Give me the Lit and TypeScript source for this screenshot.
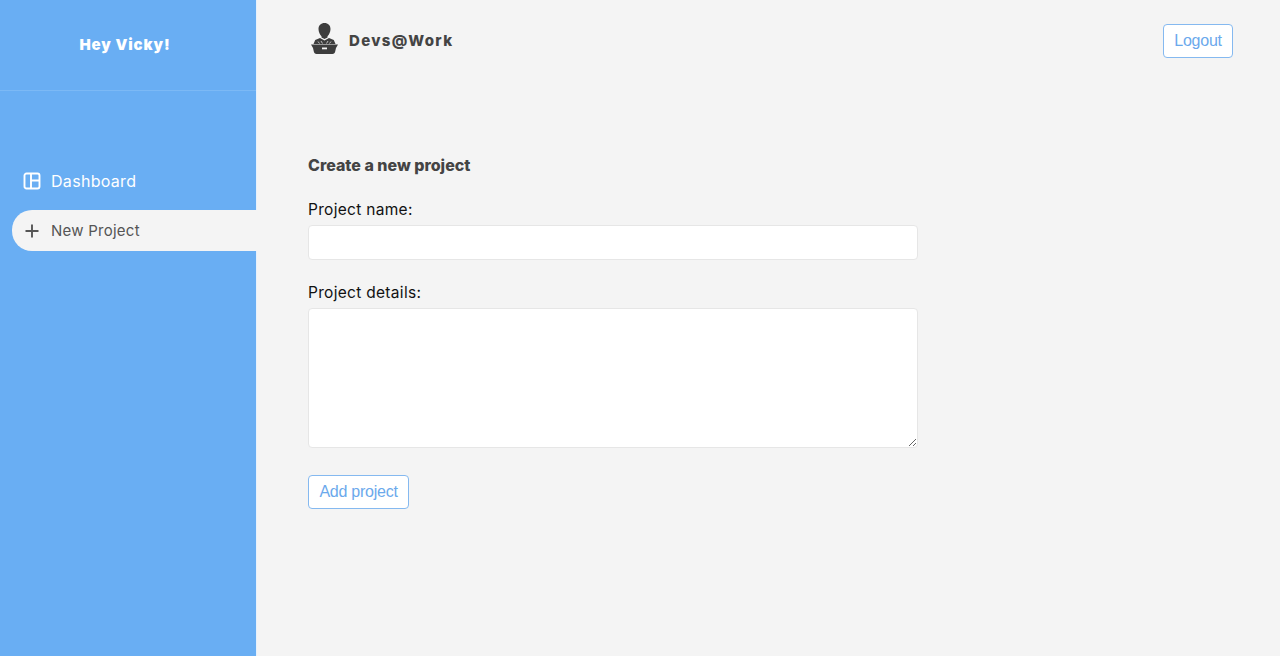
import { LitElement, html, css } from "lit";
import { customElement } from "lit/decorators.js";

@customElement("app-root")
export class AppRoot extends LitElement {
  static styles = css`
    :host { display: flex; width: 100%; height: 656px; background: #f4f4f4; font-family: "Inter", "Noto Sans", sans-serif; overflow: hidden; }
    * { box-sizing: border-box; }
    .side { width: 257px; flex: none; background: #69aef3; border-right: 1px solid #e6f1fc; color: #fff; padding-left: 12px; }
    .user { margin-left: -12px; height: 91px; border-bottom: 1px solid #7cb9f5; padding: 35px 6px 0 0; text-align: center; font-weight: 900; font-size: 15px; line-height: 20px; letter-spacing: 0.85px; }
    .nav { display: flex; flex-direction: column; gap: 9px; margin-top: 69px; margin-right: -1px; }
    .item { display: flex; align-items: center; gap: 10px; height: 41px; padding-left: 11px; border-radius: 20px 0 0 20px; font-size: 16px; letter-spacing: 0.3px; }
    .item.active { background: #f4f4f4; color: #555; font-size: 15px; letter-spacing: 0.25px; }
    .item svg { width: 18px; height: 18px; flex: none; }
    .main { flex: 1; padding: 0 47px 0 51px; }
    .top { height: 81px; display: flex; justify-content: space-between; align-items: center; }
    .logo { display: flex; align-items: center; gap: 11px; padding-left: 3px; font-family: "Inter", sans-serif; font-weight: 800; font-size: 15px; letter-spacing: 1.35px; color: #444; }
    .logo svg { width: 27px; height: 31px; margin-bottom: 4px; }
    button { background: #fff; border: 1px solid #85b9f0; border-radius: 4px; color: #6ba9ec; font: 16px "Liberation Sans", Arial, sans-serif; letter-spacing: -0.25px; height: 34px; padding: 0 11px; }
    .logout { width: 70px; padding: 0; }
    .form { display: flex; flex-direction: column; width: 610px; margin-top: 74px; }
    h2 { margin: 0 0 25px; font-size: 16px; font-weight: 800; line-height: 20px; color: #444; letter-spacing: 0; }
    label { font-size: 15.5px; line-height: 20px; color: #111; margin-bottom: 5px; display: block; letter-spacing: 0.3px; }
    input, textarea { display: block; width: 610px; background: #fff; border: 1px solid #e6e6e6; border-radius: 4px; outline: none; margin: 0; padding: 0 8px; }
    input { height: 35px; margin-bottom: 23px; }
    textarea { height: 140px; resize: vertical; margin-bottom: 27px; }
    .add { align-self: flex-start; width: 101px; padding: 0; }
  `;

  render() {
    return html`
      <aside class="side">
        <div class="user">Hey Vicky!</div>
        <nav class="nav">
          <div class="item">
            <svg viewBox="0 0 18 18" fill="none" stroke="#fff" stroke-width="1.9"><rect x="1.5" y="1.5" width="15" height="15" rx="2"/><path d="M8 1.500v15M8 8.500h8.500"/></svg>
            Dashboard
          </div>
          <div class="item active">
            <svg viewBox="0 0 18 18" fill="none" stroke="#555" stroke-width="1.9"><path d="M9 2.500v13M2.500 9h13"/></svg>
            New Project
          </div>
        </nav>
      </aside>
      <main class="main">
        <header class="top">
          <div class="logo">
            <svg viewBox="0 0 27 31" fill="#3d3d3d">
              <path d="M13.500 0c3.600 0 6 2.400 6 6 0 3.200-1.600 6-3 7.200v1.300l-3 1.500-3-1.500v-1.300C9.100 12 7.500 9.200 7.500 6c0-3.600 2.400-6 6-6z"/>
              <path d="M9 15 4.200 17 2.500 21h22L22.800 17 18 15l-4.500 2.500z"/>
              <path d="M0 21.500h27l-2 3.500-.8 3.500c-.3 1.500-1.200 2.500-2.700 2.500H5.500c-1.500 0-2.400-1-2.700-2.500L2 25z"/>
              <rect x="11" y="24.500" width="5" height="1.800" fill="#f4f4f4"/>
              <path d="M7 18.500l1.500 2M10 18l1.500 2.500M17 18l-1.500 2.500M20 18.500l-1.500 2" stroke="#f4f4f4" stroke-width=".7" fill="none"/>
            </svg>
            Devs@Work
          </div>
          <button class="logout">Logout</button>
        </header>
        <form class="form">
          <h2>Create a new project</h2>
          <label>Project name:</label>
          <input type="text" />
          <label>Project details:</label>
          <textarea></textarea>
          <button class="add" type="button">Add project</button>
        </form>
      </main>
    `;
  }
}
